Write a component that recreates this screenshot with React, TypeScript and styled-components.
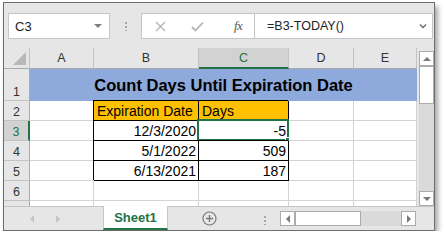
import React from "react";
import styled, { createGlobalStyle, css } from "styled-components";

const Global = createGlobalStyle`
  html, body { margin: 0; padding: 0; background: #ffffff; }
  body { font-family: "Liberation Sans", Arial, sans-serif; }
  * { box-sizing: border-box; }
`;

const GREEN = "#217346";
const GRID = "#d4d4d4";
const CHROME = "#e6e6e6";

const Frame = styled.div`
  margin: 2px 0 0 3px;
  width: 432px;
  height: 229px;
  border: 1px solid #6e6e6e;
  background: ${CHROME};
  display: flex;
  flex-direction: column;
  box-shadow: 3px 4px 5px rgba(0, 0, 0, 0.35);
  overflow: hidden;
`;

const Toolbar = styled.div`
  height: 45px;
  flex: none;
  display: flex;
  align-items: flex-start;
  padding: 10px 0 0 4px;
`;

const Box = styled.div`
  height: 26px;
  background: #ffffff;
  border: 1px solid #c6c6c6;
  display: flex;
  align-items: center;
`;

const NameBox = styled(Box)`
  width: 102px;
  padding: 0 0 0 6px;
  justify-content: space-between;
  font-size: 13px;
  color: #222;
`;

const Caret = styled.span`
  width: 0;
  height: 0;
  border-left: 4px solid transparent;
  border-right: 4px solid transparent;
  border-top: 4px solid #7f7f7f;
  margin-right: 7px;
`;

const Grip = styled.div`
  width: 2px;
  height: 10px;
  margin: 8px 14px 0 15px;
  background: radial-gradient(circle, #a6a6a6 0.9px, transparent 1.1px) 0 0 / 2px 4px repeat-y;
`;

const FormulaBox = styled(Box)`
  width: 292px;
`;

const FxButtons = styled.div`
  width: 113px;
  height: 100%;
  display: flex;
  align-items: center;
  border-right: 1px solid #c6c6c6;
  padding-left: 13px;
`;

const IconSlot = styled.span<{ $w: number }>`
  width: ${(p) => p.$w}px;
  display: flex;
  align-items: center;
`;

const Fx = styled.span`
  font-family: "Liberation Serif", "DejaVu Serif", serif;
  font-style: italic;
  font-size: 13px;
  color: #555;
  letter-spacing: -0.5px;
`;

const FormulaText = styled.div`
  flex: 1;
  padding-left: 12px;
  font-size: 12.5px;
  color: #222;
  display: flex;
  align-items: center;
  justify-content: space-between;
`;

const Chevron = styled.span`
  margin-right: 5px;
  display: flex;
`;

const Main = styled.div`
  height: 158px;
  flex: none;
  display: flex;
  overflow: hidden;
`;

const Sheet = styled.div`
  display: grid;
  grid-template-columns: 26px 64px 105px 90px 65px 63px;
  grid-template-rows: 21px 32px repeat(6, 20px);
  background: #ffffff;
  align-self: flex-start;
`;

const HeadCell = styled.div<{ $sel?: boolean; $row?: boolean }>`
  background: ${(p) => (p.$sel ? "#d2d2d2" : CHROME)};
  border-right: 1px solid ${(p) => (p.$row ? "#ababab" : "#c3c3c3")};
  border-bottom: 1px solid ${(p) => (p.$row ? "#c3c3c3" : "#ababab")};
  display: flex;
  align-items: center;
  justify-content: center;
  font-size: 12.5px;
  color: #333;
  ${(p) =>
    p.$sel &&
    (p.$row
      ? css`
          border-right: 2px solid ${GREEN};
          color: ${GREEN};
        `
      : css`
          border-bottom: 2px solid ${GREEN};
          color: ${GREEN};
        `)}
`;

const RowHead = styled(HeadCell)`
  align-items: flex-end;
  padding-bottom: 1px;
`;

const Corner = styled(HeadCell)`
  position: relative;
  &::after {
    content: "";
    position: absolute;
    right: 3px;
    bottom: 3px;
    width: 0;
    height: 0;
    border-left: 13px solid transparent;
    border-bottom: 13px solid #b8b8b8;
  }
`;

const Cell = styled.div<{
  $fill?: string;
  $boxed?: boolean;
  $right?: boolean;
  $span?: number;
  $title?: boolean;
}>`
  position: relative;
  background: ${(p) => p.$fill ?? "#ffffff"};
  border-right: 1px solid ${(p) => (p.$boxed ? "#000" : p.$fill ? p.$fill : GRID)};
  border-bottom: 1px solid ${(p) => (p.$boxed ? "#000" : p.$fill ? p.$fill : GRID)};
  ${(p) => p.$boxed && css`box-shadow: -1px -1px 0 0 #000;`}
  ${(p) => p.$span && css`grid-column: span ${p.$span};`}
  display: flex;
  align-items: flex-end;
  justify-content: ${(p) => (p.$title ? "center" : p.$right ? "flex-end" : "flex-start")};
  padding: 0 2px 1px 3px;
  font-size: 14px;
  color: #000;
  white-space: nowrap;
  ${(p) =>
    p.$title &&
    css`
      font-weight: bold;
      font-size: 16.5px;
      padding-bottom: 5px;
    `}
`;

const Selection = styled.div`
  position: absolute;
  left: -2px;
  top: -2px;
  right: -1px;
  bottom: -1px;
  border: 2px solid ${GREEN};
  pointer-events: none;
`;

const Handle = styled.div`
  position: absolute;
  right: -4px;
  bottom: -4px;
  width: 6px;
  height: 6px;
  background: ${GREEN};
  border: 1px solid #fff;
`;

const VScroll = styled.div`
  width: 17px;
  padding: 3px 0 0 2px;
  display: flex;
  flex-direction: column;
`;

const ScrollBtn = styled.div<{ $w?: number; $h?: number }>`
  width: ${(p) => p.$w ?? 15}px;
  height: ${(p) => p.$h ?? 15}px;
  flex: none;
  background: #ffffff;
  border: 1px solid #ababab;
  display: flex;
  align-items: center;
  justify-content: center;
`;

const VTrack = styled.div`
  flex: 1;
  width: 15px;
  background: #dadada;
`;

const BottomBar = styled.div`
  flex: 1;
  display: flex;
  align-items: stretch;
  border-top: 1px solid #c6c6c6;
`;

const NavArea = styled.div`
  width: 99px;
  display: flex;
  align-items: center;
  gap: 22px;
  padding-left: 26px;
`;

const Tri = styled.span<{ $dir: "left" | "right" | "up" | "down"; $c?: string; $s?: number }>`
  width: 0;
  height: 0;
  ${(p) => {
    const s = p.$s ?? 4;
    const c = p.$c ?? "#c4c4c4";
    switch (p.$dir) {
      case "left":
        return css`border-top: ${s}px solid transparent; border-bottom: ${s}px solid transparent; border-right: ${s}px solid ${c};`;
      case "right":
        return css`border-top: ${s}px solid transparent; border-bottom: ${s}px solid transparent; border-left: ${s}px solid ${c};`;
      case "up":
        return css`border-left: ${s}px solid transparent; border-right: ${s}px solid transparent; border-bottom: ${s}px solid ${c};`;
      default:
        return css`border-left: ${s}px solid transparent; border-right: ${s}px solid transparent; border-top: ${s}px solid ${c};`;
    }
  }}
`;

const Tab = styled.div`
  width: 65px;
  margin-top: -1px;
  background: #ffffff;
  border-left: 1px solid #c6c6c6;
  border-right: 1px solid #c6c6c6;
  border-bottom: 2px solid ${GREEN};
  display: flex;
  align-items: center;
  justify-content: center;
  font-weight: bold;
  font-size: 13px;
  color: ${GREEN};
  padding-top: 1px;
`;

const AddSheet = styled.div`
  width: 52px;
  display: flex;
  align-items: center;
  justify-content: center;
  padding-left: 30px;
`;

const HGrip = styled(Grip)`
  margin: 8px 14px 0 auto;
`;

const HScroll = styled.div`
  display: flex;
  align-items: center;
  width: 136px;
  margin-right: 18px;
`;

const HTrack = styled.div`
  flex: 1;
  height: 15px;
  background: #dadada;
  display: flex;
`;

type Row = { n: string; b?: string; c?: string; head?: boolean; sel?: boolean };

const rows: Row[] = [
  { n: "2", b: "Expiration Date", c: "Days", head: true },
  { n: "3", b: "12/3/2020", c: "-5", sel: true },
  { n: "4", b: "5/1/2022", c: "509" },
  { n: "5", b: "6/13/2021", c: "187" },
  { n: "6" },
  { n: "" },
];

export default function App() {
  const cols = ["A", "B", "C", "D", "E"];
  return (
    <>
      <Global />
      <Frame>
        <Toolbar>
          <NameBox>
            <span>C3</span>
            <Caret />
          </NameBox>
          <Grip />
          <FormulaBox>
            <FxButtons>
              <IconSlot $w={36}>
                <svg width="11" height="11" viewBox="0 0 11 11">
                  <path d="M1 1L10 10M10 1L1 10" stroke="#b3b3b3" strokeWidth="1.3" fill="none" />
                </svg>
              </IconSlot>
              <IconSlot $w={43}>
                <svg width="13" height="11" viewBox="0 0 13 11">
                  <path d="M1 6L4.5 9.5L12 1.5" stroke="#b3b3b3" strokeWidth="1.8" fill="none" />
                </svg>
              </IconSlot>
              <Fx>fx</Fx>
            </FxButtons>
            <FormulaText>
              <span>=B3-TODAY()</span>
              <Chevron>
                <svg width="8" height="6" viewBox="0 0 8 6">
                  <path d="M1 1.5L4 4.5L7 1.5" stroke="#6b6b6b" strokeWidth="1.4" fill="none" />
                </svg>
              </Chevron>
            </FormulaText>
          </FormulaBox>
        </Toolbar>
        <Main>
          <Sheet>
            <Corner />
            {cols.map((c) => (
              <HeadCell key={c} $sel={c === "C"}>
                {c}
              </HeadCell>
            ))}

            <RowHead $row>1</RowHead>
            <Cell $fill="#8ea9db" $span={5} $title>
              Count Days Until Expiration Date
            </Cell>

            {rows.map((r, i) => {
              const boxed = r.b !== undefined;
              const fill = r.head ? "#ffc000" : undefined;
              return (
                <React.Fragment key={i}>
                  <RowHead $row $sel={r.sel}>
                    {r.n}
                  </RowHead>
                  <Cell />
                  <Cell $boxed={boxed} $fill={fill} $right={!r.head}>
                    {r.b}
                  </Cell>
                  <Cell $boxed={boxed} $fill={fill} $right={!r.head}>
                    {r.c}
                    {r.sel && (
                      <Selection>
                        <Handle />
                      </Selection>
                    )}
                  </Cell>
                  <Cell />
                  <Cell />
                </React.Fragment>
              );
            })}
          </Sheet>
          <VScroll>
            <ScrollBtn>
              <Tri $dir="up" $c="#7a7a7a" $s={4} />
            </ScrollBtn>
            <ScrollBtn $h={38} />
            <VTrack />
            <ScrollBtn>
              <Tri $dir="down" $c="#7a7a7a" $s={4} />
            </ScrollBtn>
          </VScroll>
        </Main>
        <BottomBar>
          <NavArea>
            <Tri $dir="left" />
            <Tri $dir="right" />
          </NavArea>
          <Tab>Sheet1</Tab>
          <AddSheet>
            <svg width="15" height="15" viewBox="0 0 15 15">
              <circle cx="7.5" cy="7.5" r="6.5" stroke="#7a7a7a" strokeWidth="1.2" fill="none" />
              <path d="M7.5 4V11M4 7.5H11" stroke="#7a7a7a" strokeWidth="1.4" />
            </svg>
          </AddSheet>
          <HGrip />
          <HScroll>
            <ScrollBtn>
              <Tri $dir="left" $c="#7a7a7a" $s={4} />
            </ScrollBtn>
            <HTrack>
              <ScrollBtn $w={66} />
            </HTrack>
            <ScrollBtn>
              <Tri $dir="right" $c="#7a7a7a" $s={4} />
            </ScrollBtn>
          </HScroll>
        </BottomBar>
      </Frame>
    </>
  );
}
